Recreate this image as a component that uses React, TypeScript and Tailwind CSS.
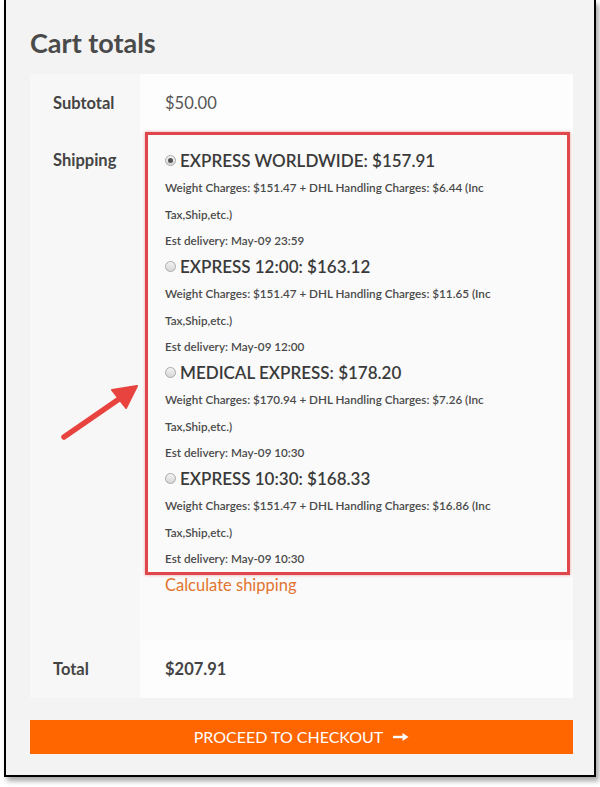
import React from "react";

type Rate = {
  name: string;
  price: string;
  weight: string;
  handling: string;
  eta: string;
  checked?: boolean;
};

const rates: Rate[] = [
  { name: "EXPRESS WORLDWIDE", price: "$157.91", weight: "$151.47", handling: "$6.44", eta: "May-09 23:59", checked: true },
  { name: "EXPRESS 12:00", price: "$163.12", weight: "$151.47", handling: "$11.65", eta: "May-09 12:00" },
  { name: "MEDICAL EXPRESS", price: "$178.20", weight: "$170.94", handling: "$7.26", eta: "May-09 10:30" },
  { name: "EXPRESS 10:30", price: "$168.33", weight: "$151.47", handling: "$16.86", eta: "May-09 10:30" },
];

function Radio({ checked }: { checked?: boolean }) {
  return (
    <span className="mr-[4px] inline-flex h-[11px] w-[11px] shrink-0 items-center justify-center rounded-full border border-[#a9a9a9] bg-gradient-to-b from-[#f4f4f4] to-[#d6d6d6]">
      {checked ? <span className="h-[5px] w-[5px] rounded-full bg-[#555]" /> : null}
    </span>
  );
}

export default function App() {
  return (
    <div className="h-[787px] w-[600px] bg-white font-['Lato','Liberation_Sans',sans-serif]">
      <div className="relative ml-[4px] h-[777px] w-[592px] border-x-2 border-b-2 border-black bg-[#f3f3f3] px-[24px] pt-[27px] shadow-[3px_4px_5px_rgba(0,0,0,0.35)]">
        <h2 className="text-[27px] leading-[32px] font-bold text-[#4a4a4a]">Cart totals</h2>

        <div className="mt-[15px] w-[543px] text-[16.5px]">
          <div className="flex h-[58px]">
            <div className="flex w-[110px] items-center bg-[#f7f7f7] pl-[23px] font-bold text-[#444]">Subtotal</div>
            <div className="flex flex-1 items-center bg-[#fdfdfd] pl-[25px] text-[#555]">$50.00</div>
          </div>

          <div className="flex">
            <div className="w-[110px] bg-[#f7f7f7] pt-[15px] pl-[23px] font-bold leading-[26px] text-[#444]">Shipping</div>
            <div className="flex-1 bg-[#fafafa] pr-[3px] pb-[45px] pl-[5px]">
              <div className="border-[3px] border-[#e0474c] pt-[12px] pb-[1px] pl-[17px] shadow-[0_0_3px_rgba(224,71,76,0.5)]">
                {rates.map((rate) => (
                  <div key={rate.name}>
                    <div className="flex h-[27px] items-center text-[17px] font-semibold text-[#3a3a3a]">
                      <Radio checked={rate.checked} />
                      {rate.name}: {rate.price}
                    </div>
                    <div className="text-[11.7px] font-semibold text-[#4a4a4a]">
                      <p className="leading-[27px]">
                        Weight Charges: {rate.weight} + DHL Handling Charges: {rate.handling} (Inc
                      </p>
                      <p className="leading-[26px]">Tax,Ship,etc.)</p>
                      <p className="leading-[26px]">Est delivery: {rate.eta}</p>
                    </div>
                  </div>
                ))}
              </div>
              <p className="pl-[20px] leading-[20px] text-[#e2742f]">Calculate shipping</p>
            </div>
          </div>

          <div className="flex h-[58px]">
            <div className="flex w-[110px] items-center bg-[#f7f7f7] pl-[23px] font-bold text-[#444]">Total</div>
            <div className="flex flex-1 items-center bg-[#fdfdfd] pl-[25px] font-bold text-[#444]">$207.91</div>
          </div>
        </div>

        <button
          type="button"
          className="mt-[22px] flex h-[34px] w-[543px] items-center justify-center gap-[10px] bg-[#ff6600] text-[16px] text-white"
        >
          PROCEED TO CHECKOUT
          <svg width="16" height="10" viewBox="0 0 16 10">
            <path d="M0 5h11" stroke="white" strokeWidth="2.4" />
            <path d="M9.5 1L15.5 5L9.5 9Z" fill="white" />
          </svg>
        </button>

        <svg className="absolute top-[380px] left-[50px]" width="90" height="66" viewBox="0 0 90 66">
          <path d="M8 57L66 17" stroke="#e8433f" strokeWidth="5.5" strokeLinecap="round" />
          <path d="M81 6L56 10L70 28Z" fill="#e8433f" stroke="#e8433f" strokeWidth="2" strokeLinejoin="round" />
        </svg>
      </div>
    </div>
  );
}
